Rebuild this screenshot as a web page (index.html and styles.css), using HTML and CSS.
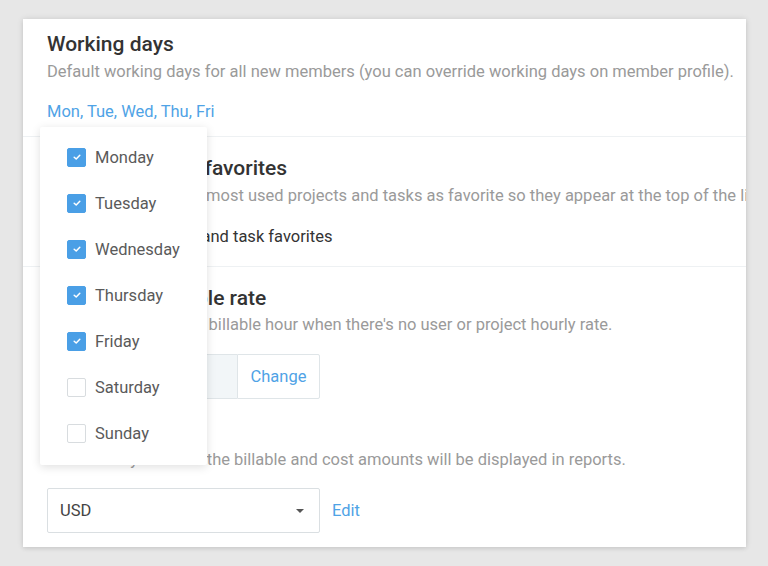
FILE: index.html
```html
<!DOCTYPE html>
<html>
<head>
<meta charset="utf-8">
<link rel="stylesheet" href="styles.css">
</head>
<body>
<div class="card">
  <section class="sec sec-first">
    <h2 class="title">Working days</h2>
    <p class="desc">Default working days for all new members (you can override working days on member profile).</p>
    <a class="link days">Mon, Tue, Wed, Thu, Fri</a>
  </section>
  <section class="sec sec-fav">
    <h2 class="title">Project and task favorites</h2>
    <p class="desc">Let people mark their most used projects and tasks as favorite so they appear at the top of the list when tracking time.</p>
    <div class="option">
      <span class="toggle"><span class="knob"></span></span>
      <span class="option-text">Enable project and task favorites</span>
    </div>
  </section>
  <section class="sec sec-rate">
    <h2 class="title">Workspace billable rate</h2>
    <p class="desc">Default price for each billable hour when there's no user or project hourly rate.</p>
    <div class="rate">
      <div class="rate-value">USD 0.00</div>
      <button class="rate-btn">Change</button>
    </div>
    <h2 class="title title-cur">Currency</h2>
    <p class="desc desc-cur">Set currency in which the billable and cost amounts will be displayed in reports.</p>
    <div class="cur-row">
      <div class="select">
        <span class="select-text">USD</span>
        <span class="caret"></span>
      </div>
      <a class="link edit">Edit</a>
    </div>
  </section>

  <div class="menu">
    <label class="item"><span class="cb on"><svg viewBox="0 0 10 10" width="10" height="10"><path d="M2.2 5.2 L4.2 7 L7.8 3.2" fill="none" stroke="#fff" stroke-width="1.5" stroke-linecap="round" stroke-linejoin="round"/></svg></span><span class="item-text">Monday</span></label>
    <label class="item"><span class="cb on"><svg viewBox="0 0 10 10" width="10" height="10"><path d="M2.2 5.2 L4.2 7 L7.8 3.2" fill="none" stroke="#fff" stroke-width="1.5" stroke-linecap="round" stroke-linejoin="round"/></svg></span><span class="item-text">Tuesday</span></label>
    <label class="item"><span class="cb on"><svg viewBox="0 0 10 10" width="10" height="10"><path d="M2.2 5.2 L4.2 7 L7.8 3.2" fill="none" stroke="#fff" stroke-width="1.5" stroke-linecap="round" stroke-linejoin="round"/></svg></span><span class="item-text">Wednesday</span></label>
    <label class="item"><span class="cb on"><svg viewBox="0 0 10 10" width="10" height="10"><path d="M2.2 5.2 L4.2 7 L7.8 3.2" fill="none" stroke="#fff" stroke-width="1.5" stroke-linecap="round" stroke-linejoin="round"/></svg></span><span class="item-text">Thursday</span></label>
    <label class="item"><span class="cb on"><svg viewBox="0 0 10 10" width="10" height="10"><path d="M2.2 5.2 L4.2 7 L7.8 3.2" fill="none" stroke="#fff" stroke-width="1.5" stroke-linecap="round" stroke-linejoin="round"/></svg></span><span class="item-text">Friday</span></label>
    <label class="item"><span class="cb"></span><span class="item-text">Saturday</span></label>
    <label class="item"><span class="cb"></span><span class="item-text">Sunday</span></label>
  </div>
</div>
</body>
</html>
```

FILE: styles.css
```css
* { box-sizing: border-box; }
html, body { margin: 0; padding: 0; }
body {
  background: #e7e7e7;
  font-family: Roboto, "Liberation Sans", Arial, sans-serif;
  width: 768px;
  height: 566px;
  overflow: hidden;
  padding: 19px 22px 0 23px;
}
.card {
  position: relative;
  width: 723px;
  height: 528px;
  background: #fff;
  box-shadow: 0 0 6px rgba(0,0,0,0.12), 0 2px 4px rgba(0,0,0,0.06);
  overflow: hidden;
}
.sec {
  padding-left: 24px;
  white-space: nowrap;
}
.sec-first {
  padding-top: 13px;
  padding-bottom: 14px;
  border-bottom: 1px solid #eef1f3;
}
.sec-fav {
  padding-top: 19px;
  padding-bottom: 20px;
  border-bottom: 1px solid #eef1f3;
}
.sec-rate {
  padding-top: 19px;
}
.title {
  margin: 0;
  font-size: 21px;
  line-height: 24px;
  font-weight: 500;
  color: #333;
}
.desc {
  margin: 6px 0 0;
  font-size: 16.5px;
  line-height: 20px;
  color: #9a9a9a;
}
.link {
  color: #4fa3e6;
  font-size: 16.5px;
  line-height: 20px;
  cursor: pointer;
}
.days {
  display: block;
  margin-top: 20px;
}
.option {
  margin-top: 20px;
  display: flex;
  align-items: center;
  gap: 10px;
  height: 20px;
}
.toggle {
  width: 36px;
  height: 18px;
  border-radius: 9px;
  background: #ccc;
  position: relative;
}
.knob {
  position: absolute;
  left: 2px;
  top: 2px;
  width: 14px;
  height: 14px;
  border-radius: 50%;
  background: #fff;
}
.option-text {
  font-size: 16.5px;
  color: #333;
}
.sec-rate .desc { margin-top: 5px; }
.rate {
  margin-top: 19px;
  display: flex;
  height: 45px;
  width: 273px;
}
.rate-value {
  width: 190px;
  background: #f2f6f8;
  border: 1px solid #dfe5e8;
  border-right: none;
  color: #f2f6f8;
  font-size: 15px;
  display: flex;
  align-items: center;
  padding-left: 12px;
  border-radius: 2px 0 0 2px;
}
.rate-btn {
  width: 83px;
  background: #fff;
  border: 1px solid #dfe5e8;
  border-radius: 0 2px 2px 0;
  color: #4fa3e6;
  font-family: inherit;
  font-size: 16.5px;
  padding: 0;
}
.title-cur { margin-top: 17px; }
.sec-rate .desc-cur { margin-top: 10px; }
.cur-row {
  margin-top: 18px;
  display: flex;
  align-items: center;
  gap: 12px;
}
.select {
  width: 273px;
  height: 45px;
  border: 1px solid #dadfe2;
  border-radius: 2px;
  display: flex;
  align-items: center;
  justify-content: space-between;
  padding: 0 15px 0 12px;
}
.select-text {
  font-size: 16.5px;
  color: #444;
}
.caret {
  width: 0;
  height: 0;
  border-left: 4.5px solid transparent;
  border-right: 4.5px solid transparent;
  border-top: 4.5px solid #555;
}
.edit {
  font-size: 16.5px;
}
.menu {
  position: absolute;
  left: 17px;
  top: 108px;
  width: 167px;
  height: 338px;
  background: #fff;
  box-shadow: 0 2px 10px rgba(0,0,0,0.13);
  border-radius: 2px;
  padding: 7px 0 9px 27px;
  display: flex;
  flex-direction: column;
}
.item {
  height: 46px;
  display: flex;
  align-items: center;
  gap: 9px;
}
.cb {
  width: 19px;
  height: 19px;
  border-radius: 2px;
  border: 1px solid #d8dcdf;
  background: #fff;
  display: flex;
  align-items: center;
  justify-content: center;
  flex: none;
}
.cb.on {
  background: #4a9fe6;
  border-color: #4a9fe6;
}
.item-text {
  font-size: 16.5px;
  color: #5a5a5a;
}
```
